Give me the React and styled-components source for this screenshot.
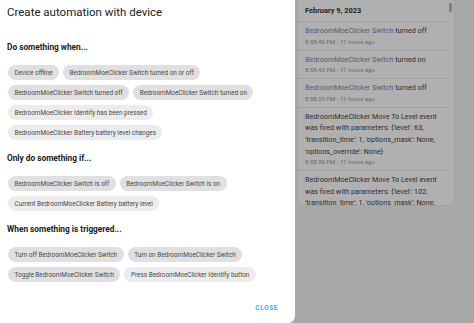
import React from 'react';
import styled, { createGlobalStyle } from 'styled-components';

const GlobalStyle = createGlobalStyle`
	html, body {
		margin: 0;
		padding: 0;
		background: #a8a8a8;
		font-family: Roboto, "Liberation Sans", sans-serif;
		overflow: hidden;
	}
`;

const groups = [
	{
		title: 'Do something when...',
		chips: [
			{ label: 'Device offline' },
			{ label: 'BedroomMoeClicker Switch turned on or off' },
			{ label: 'BedroomMoeClicker Switch turned off' },
			{ label: 'BedroomMoeClicker Switch turned on' },
			{ label: 'BedroomMoeClicker Identify has been pressed', light: true },
			{ label: 'BedroomMoeClicker Battery battery level changes', light: true },
		],
	},
	{
		title: 'Only do something if...',
		chips: [
			{ label: 'BedroomMoeClicker Switch is off' },
			{ label: 'BedroomMoeClicker Switch is on' },
			{ label: 'Current BedroomMoeClicker Battery battery level', light: true },
		],
	},
	{
		title: 'When something is triggered...',
		chips: [
			{ label: 'Turn off BedroomMoeClicker Switch' },
			{ label: 'Turn on BedroomMoeClicker Switch' },
			{ label: 'Toggle BedroomMoeClicker Switch' },
			{ label: 'Press BedroomMoeClicker Identify button', light: true },
		],
	},
];

const entries = [
	{ link: 'BedroomMoeClicker Switch', text: ' turned off', time: '8:58:46 PM - 11 hours ago' },
	{ link: 'BedroomMoeClicker Switch', text: ' turned on', time: '8:58:43 PM - 11 hours ago' },
	{ link: 'BedroomMoeClicker Switch', text: ' turned off', time: '8:58:39 PM - 11 hours ago' },
	{
		text: "BedroomMoeClicker Move To Level event was fired with parameters: {'level': 63, 'transition_time': 1, 'options_mask': None, 'options_override': None}",
		time: '8:58:36 PM - 11 hours ago',
	},
	{
		text: "BedroomMoeClicker Move To Level event was fired with parameters: {'level': 102, 'transition_time': 1, 'options_mask': None,",
	},
];

function App () {
	return (
		<Page>
			<GlobalStyle />
			<Dialog>
				<Title>Create automation with device</Title>
				{groups.map((g) => (
					<Section key={g.title}>
						<SectionTitle>{g.title}</SectionTitle>
						<ChipSet>
							{g.chips.map((c) => (
								<Chip key={c.label} light={c.light}>{c.label}</Chip>
							))}
						</ChipSet>
					</Section>
				))}
				<Actions>
					<CloseBtn>Close</CloseBtn>
				</Actions>
			</Dialog>
			<Backdrop>
				<Card>
					<CardList>
						<DateHeader>February 9, 2023</DateHeader>
						{entries.map((e, i) => (
							<Entry key={i}>
								<EntryText>
									{e.link && <EntryLink>{e.link}</EntryLink>}
									{e.text}
								</EntryText>
								{e.time && <Time>{e.time}</Time>}
							</Entry>
						))}
					</CardList>
					<ScrollTrack>
						<ScrollThumb />
					</ScrollTrack>
				</Card>
			</Backdrop>
		</Page>
	);
}

export default App;

const Page = styled.div`
	display: flex;
	width: 474px;
	height: 323px;
	overflow: hidden;
`;

const Dialog = styled.div`
	width: 295px;
	flex: none;
	height: 323px;
	box-sizing: border-box;
	background: #ffffff;
	border-radius: 0 0 7px 0;
	padding: 4px 7px 0 7px;
	display: flex;
	flex-direction: column;
`;

const Title = styled.h2`
	margin: 0;
	font-size: 11.5px;
	font-weight: 400;
	color: #212121;
	line-height: 16px;
	margin-bottom: 21px;
`;

const Section = styled.div`
	display: flex;
	flex-direction: column;
	margin-bottom: 12px;
`;

const SectionTitle = styled.h3`
	margin: 0;
	font-size: 8.3px;
	font-weight: 700;
	color: #212121;
	line-height: 12px;
	margin-bottom: 12px;
`;

const ChipSet = styled.div`
	display: flex;
	flex-wrap: wrap;
	gap: 5px 4px;
	padding-left: 1px;
`;

const Chip = styled.span`
	display: inline-flex;
	align-items: center;
	height: 15px;
	padding: 0 6.5px;
	border-radius: 8px;
	font-size: 6.4px;
	color: #4a4a4a;
	background: ${(props) => (props.light ? '#ececec' : '#e0e0e0')};
	white-space: nowrap;
`;

const Actions = styled.div`
	display: flex;
	justify-content: flex-end;
	margin-top: auto;
	padding: 0 10px 11px 0;
`;

const CloseBtn = styled.span`
	font-size: 6.5px;
	font-weight: 700;
	letter-spacing: 0.6px;
	text-transform: uppercase;
	color: #29b6f6;
`;

const Backdrop = styled.div`
	flex: 1;
	padding-left: 2px;
`;

const Card = styled.div`
	width: 158px;
	height: 206px;
	box-sizing: border-box;
	background: #b0b0b0;
	border: 1px solid #a2a2a2;
	border-top: none;
	border-radius: 0 0 5px 5px;
	display: flex;
	overflow: hidden;
`;

const CardList = styled.div`
	flex: 1;
	min-width: 0;
	display: flex;
	flex-direction: column;
`;

const DateHeader = styled.div`
	font-size: 7.4px;
	font-weight: 700;
	color: #262626;
	padding: 6px 0 5px 7px;
	line-height: 10px;
	border-bottom: 1px solid #a0a0a0;
`;

const Entry = styled.div`
	padding: 3px 6px 3px 7px;
	border-bottom: 1px solid #a0a0a0;
`;

const EntryText = styled.div`
	font-size: 7.2px;
	line-height: 11.6px;
	color: #2e2e2e;
`;

const EntryLink = styled.span`
	color: #4f5d78;
`;

const Time = styled.div`
	font-size: 6px;
	line-height: 10px;
	color: #6a6a6a;
`;

const ScrollTrack = styled.div`
	width: 4px;
	padding-top: 3px;
	margin-right: 1px;
`;

const ScrollThumb = styled.div`
	width: 3px;
	height: 9px;
	background: #7e7e7e;
	border-radius: 1px;
`;
